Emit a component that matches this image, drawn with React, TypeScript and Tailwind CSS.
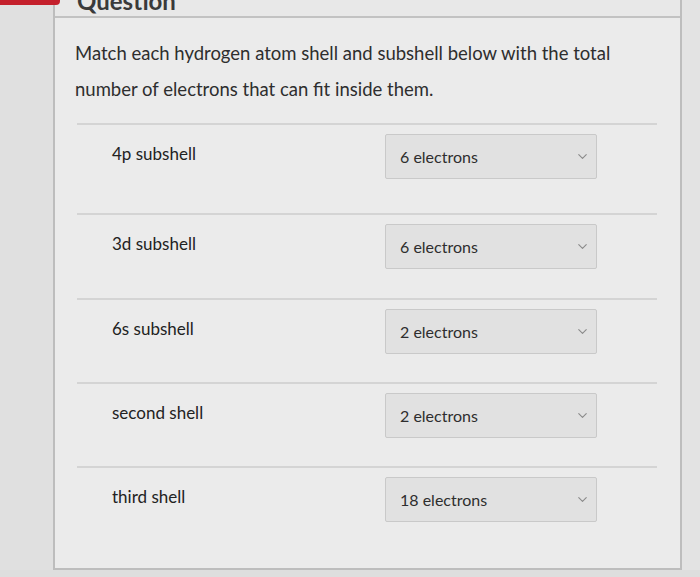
import React from 'react';
import { ChevronDown } from 'lucide-react';

const rows = [
  { label: '4p subshell', value: '6 electrons', h: 'h-[90px]' },
  { label: '3d subshell', value: '6 electrons', h: 'h-[85px]' },
  { label: '6s subshell', value: '2 electrons', h: 'h-[84px]' },
  { label: 'second shell', value: '2 electrons', h: 'h-[84px]' },
  { label: 'third shell', value: '18 electrons', h: 'h-[102px]' },
];

export default function App() {
  return (
    <div className="relative w-[700px] h-[577px] overflow-hidden bg-[#dedede] font-['Lato','Open_Sans',sans-serif] text-[#2b2b2b]">
      {/* red tab from the header */}
      <div className="absolute left-0 top-0 w-[60px] h-[5px] bg-[#c4202c] rounded-br-[4px]" />

      <div className="flex h-[570px]">
        <div className="w-[53px] bg-[#e0e0e0]" />

        <div className="flex-1 flex flex-col border-l-2 border-r-2 border-b-2 border-[#bdbdbd] bg-[#ebebeb]">
          {/* header, cut off at the top */}
          <div className="h-[22px] border-b-2 border-[#c2c2c2] bg-[#e8e8e8] overflow-hidden pl-[22px]">
            <span className="block -mt-[14px] text-[24px] font-bold leading-[30px] text-[#3a3a3a]">Question</span>
          </div>

          <p className="ml-[20px] mt-[17px] w-[560px] text-[18.5px] leading-[36px] text-[#2e2e2e]">
            Match each hydrogen atom shell and subshell below with the total number of electrons that can fit inside them.
          </p>

          <div className="ml-[22px] mr-[23px] mt-[16px]">
            {rows.map((r) => (
              <div key={r.label} className={`${r.h} border-t-2 border-[#d4d4d4] flex items-start pt-[9px]`}>
                <div className="w-[308px] pl-[35px] pt-[8px] text-[17px] leading-[24px] text-[#222]">{r.label}</div>
                <div className="w-[212px] h-[45px] flex items-center justify-between pl-[14px] pr-[6px] bg-[#e1e1e1] border border-[#c9c9c9] rounded-[2px]">
                  <span className="text-[16px] text-[#2e2e2e]">{r.value}</span>
                  <ChevronDown className="w-[15px] h-[15px] text-[#8a8a8a]" strokeWidth={1.75} />
                </div>
              </div>
            ))}
          </div>
        </div>

        <div className="w-[18px] bg-[#e3e3e3]" />
      </div>
    </div>
  );
}
